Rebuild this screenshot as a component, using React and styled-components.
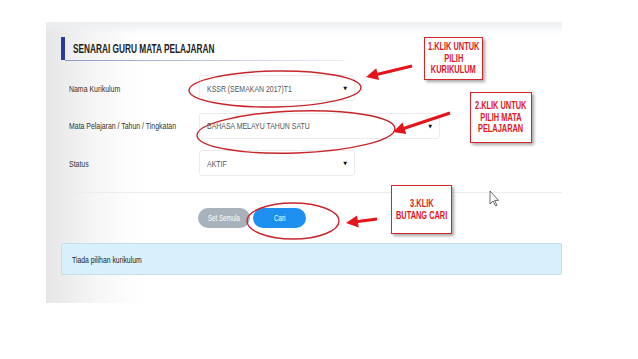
import React from "react";
import styled, { createGlobalStyle } from "styled-components";

const GlobalStyle = createGlobalStyle`
  html, body {
    margin: 0;
    padding: 0;
    background: #fff;
  }
  body {
    font-family: "Liberation Sans", Arial, sans-serif;
  }
`;

const rows = [
  { label: "Nama Kurikulum", value: "KSSR (SEMAKAN 2017)T1", width: 156 },
  { label: "Mata Pelajaran / Tahun / Tingkatan", value: "BAHASA MELAYU TAHUN SATU", width: 241 },
  { label: "Status", value: "AKTIF", width: 156 },
];

const callouts = [
  { x: 424, y: 37, w: 59, h: 43, lines: ["1.KLIK UNTUK", "PILIH", "KURIKULUM"] },
  { x: 470, y: 92, w: 62, h: 51, lines: ["2.KLIK UNTUK", "PILIH MATA", "PELAJARAN"] },
  { x: 391, y: 185, w: 61, h: 49, lines: ["3.KLIK", "BUTANG CARI"] },
];

// arrow from tail to head, drawn as a polygon
function arrowPoints(tx, ty, hx, hy) {
  const dx = hx - tx;
  const dy = hy - ty;
  const len = Math.sqrt(dx * dx + dy * dy);
  const ux = dx / len;
  const uy = dy / len;
  const px = -uy;
  const py = ux;
  const headLen = 12;
  const headW = 6;
  const shaft = 1.6;
  const bx = hx - ux * headLen;
  const by = hy - uy * headLen;
  const pts = [
    [tx + px * shaft, ty + py * shaft],
    [bx + px * shaft, by + py * shaft],
    [bx + px * headW, by + py * headW],
    [hx, hy],
    [bx - px * headW, by - py * headW],
    [bx - px * shaft, by - py * shaft],
    [tx - px * shaft, ty - py * shaft],
  ];
  return pts.map((p) => p.join(",")).join(" ");
}

function App() {
  return (
    <Page>
      <GlobalStyle />
      <Panel>
        <Header>
          <Title>
            <Narrow $scale={0.69}>SENARAI GURU MATA PELAJARAN</Narrow>
          </Title>
        </Header>
        <Form>
          {rows.map((r) => (
            <Row key={r.label}>
              <Label>
                <Narrow>{r.label}</Narrow>
              </Label>
              <Select $width={r.width}>
                <Narrow>{r.value}</Narrow>
                <Caret>▼</Caret>
              </Select>
            </Row>
          ))}
        </Form>
        <Divider />
        <Buttons>
          <BtnReset>
            <Narrow $center>Set Semula</Narrow>
          </BtnReset>
          <BtnSearch>
            <Narrow $center>Cari</Narrow>
          </BtnSearch>
        </Buttons>
        <Alert>
          <Narrow $scale={0.72}>Tiada pilihan kurikulum</Narrow>
        </Alert>
      </Panel>

      <Annotations viewBox="0 0 638 359" width="638" height="359">
        <g fill="none" stroke="#c8262c" strokeWidth="1.4">
          <ellipse cx="275" cy="89" rx="86" ry="18" transform="rotate(-1 275 89)" />
          <ellipse cx="296" cy="132" rx="99" ry="21" transform="rotate(-2 296 132)" />
          <ellipse cx="293" cy="221" rx="46" ry="18" />
        </g>
        <g fill="#e3141c">
          <polygon points={arrowPoints(412, 66, 366, 77)} />
          <polygon points={arrowPoints(450, 113, 393, 132)} />
          <polygon points={arrowPoints(377, 219, 346, 223)} />
        </g>
        <path
          d="M490 191 L490 204 L493 201 L495.5 206 L497 205.3 L494.6 200.4 L498.5 200.4 Z"
          fill="#fff"
          stroke="#444"
          strokeWidth="0.8"
          strokeLinejoin="round"
        />
      </Annotations>

      {callouts.map((c) => (
        <Callout key={c.lines[0]} style={{ left: c.x, top: c.y, width: c.w, height: c.h }}>
          {c.lines.map((l) => (
            <Narrow $center $scale={0.74} key={l}>
              {l}
            </Narrow>
          ))}
        </Callout>
      ))}
    </Page>
  );
}

export default App;

const Page = styled.div`
  position: relative;
  width: 638px;
  height: 359px;
  overflow: hidden;
  background: #fff;
  padding-top: 22px;
  padding-left: 46px;
  box-sizing: border-box;
`;

// the screenshot uses a condensed face; squeeze Liberation Sans to match
const Narrow = styled.span`
  display: inline-block;
  white-space: nowrap;
  transform: scaleX(${(p) => p.$scale || 0.73});
  transform-origin: ${(p) => (p.$center ? "center" : "left")} center;
`;

const Panel = styled.div`
  width: 516px;
  height: 281px;
  box-sizing: border-box;
  padding: 15px 0 0 15px;
  background:
    linear-gradient(to bottom, #eceef2 0, rgba(255, 255, 255, 0) 12px),
    linear-gradient(to right, #e6e6e6 0, #f6f6f6 50px, #ffffff 95px);
`;

const Header = styled.div`
  display: flex;
  align-items: center;
  height: 23px;
  border-left: 4px solid #2b3a9b;
  padding-left: 8px;
  margin-bottom: 1px;
  position: relative;
  &::after {
    content: "";
    position: absolute;
    left: 0;
    bottom: -1px;
    width: 280px;
    height: 1px;
    background: linear-gradient(to right, #8e99c9, rgba(200, 205, 225, 0.3));
  }
`;

const Title = styled.h1`
  margin: 0;
  font-size: 12px;
  font-weight: bold;
  color: #222;
`;

const Form = styled.div`
  display: flex;
  flex-direction: column;
  gap: 11.5px;
  margin-top: 15px;
  padding-left: 8px;
`;

const Row = styled.div`
  display: grid;
  grid-template-columns: 130px auto;
  align-items: center;
  height: 26px;
`;

const Label = styled.div`
  font-size: 9.5px;
  color: #333;
  white-space: nowrap;
`;

const Select = styled.div`
  display: flex;
  align-items: center;
  justify-content: space-between;
  box-sizing: border-box;
  width: ${(p) => p.$width}px;
  height: 26px;
  padding: 0 7px 0 7px;
  border: 1px solid #ececec;
  border-radius: 3px;
  background: #fff;
  font-size: 9.5px;
  color: #555;
  overflow: hidden;
`;

const Caret = styled.span`
  font-size: 5px;
  color: #111;
  font-family: "DejaVu Sans", sans-serif;
`;

const Divider = styled.div`
  height: 1px;
  background: #ededed;
  margin-top: 16px;
  width: 501px;
`;

const Buttons = styled.div`
  display: flex;
  gap: 3px;
  margin-top: 15px;
  padding-left: 137px;
  height: 20px;
`;

const BtnBase = styled.button`
  border: none;
  width: 52px;
  height: 20px;
  border-radius: 10px;
  color: #fff;
  font-family: inherit;
  font-size: 8.5px;
  padding: 0;
  display: flex;
  align-items: center;
  justify-content: center;
`;

const BtnReset = styled(BtnBase)`
  background: #a8b2bb;
`;

const BtnSearch = styled(BtnBase)`
  background: #1c8ff0;
  width: 53px;
`;

const Alert = styled.div`
  margin-top: 15px;
  box-sizing: border-box;
  width: 501px;
  height: 32px;
  display: flex;
  align-items: center;
  padding-left: 10px;
  background: #d8f0fb;
  border: 1px solid #c3dfec;
  border-radius: 2px;
  font-size: 9.5px;
  color: #222;
`;

const Annotations = styled.svg`
  position: absolute;
  left: 0;
  top: 0;
  pointer-events: none;
`;

const Callout = styled.div`
  position: absolute;
  box-sizing: border-box;
  display: flex;
  flex-direction: column;
  align-items: center;
  justify-content: center;
  background: #fff;
  border: 1.5px solid #d3252b;
  box-shadow: 2px 2px 3px rgba(0, 0, 0, 0.35);
  color: #e0151d;
  font-weight: bold;
  font-size: 10px;
  line-height: 11.5px;
  text-align: center;
`;
